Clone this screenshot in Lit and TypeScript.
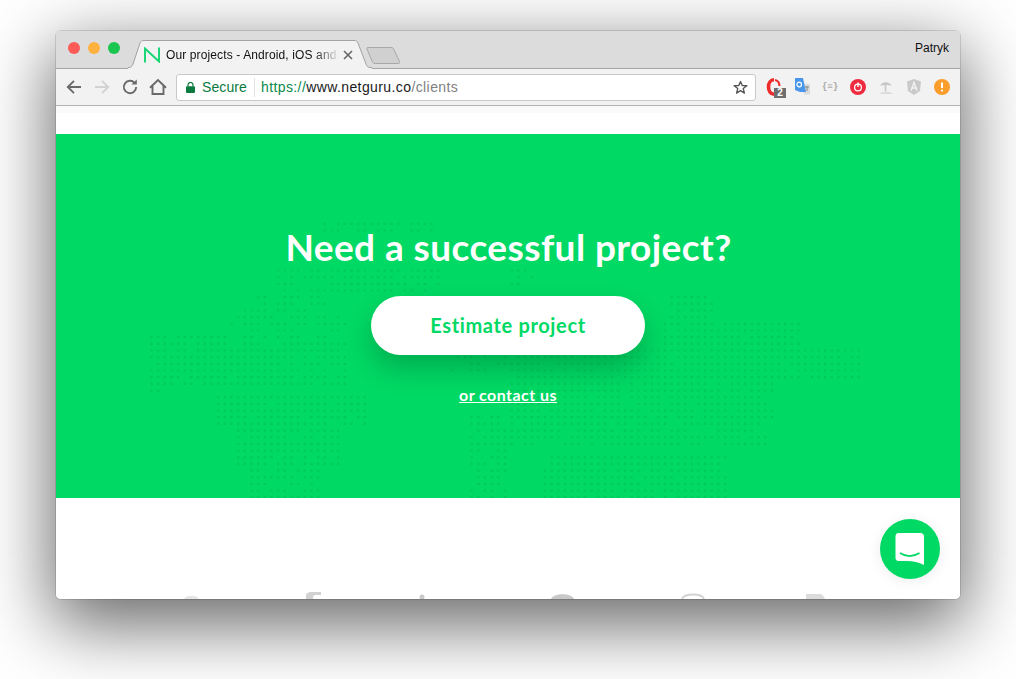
import { LitElement, html, css, svg } from "lit";
import { customElement } from "lit/decorators.js";

// Land masses of the dotted map, in hero coordinates (x0, x1, y0, y1, density)
const LAND: number[][] = [
  [262, 381, 83, 98, 0.8],
  [217, 387, 134, 158, 0.85],
  [177, 271, 159, 178, 0.6],
  [172, 291, 179, 210, 0.6],
  [94, 291, 199, 254, 0.9],
  [94, 121, 254, 268, 0.5],
  [157, 311, 259, 294, 0.9],
  [177, 284, 293, 334, 0.9],
  [191, 264, 333, 364, 0.8],
  [411, 454, 276, 364, 0.8],
  [454, 477, 134, 150, 0.6],
  [611, 661, 159, 187, 0.9],
  [604, 747, 186, 214, 0.9],
  [454, 804, 209, 247, 0.9],
  [454, 717, 246, 287, 0.9],
  [454, 714, 286, 310, 0.8],
  [487, 674, 319, 364, 0.9],
  [390, 500, 205, 236, 0.6],
];

function mapPath(): string {
  let seed = 7;
  const rnd = () => {
    seed = (seed * 16807) % 2147483647;
    return seed / 2147483647;
  };
  const step = 6.67;
  let d = "";
  for (let row = 0; row * step < 364; row++) {
    const y = row * step + 2;
    for (let col = 0; col * step < 904; col++) {
      const x = col * step + 1;
      const hit = LAND.find((r) => x >= r[0] && x < r[1] && y >= r[2] && y < r[3]);
      if (hit && rnd() < hit[4]) d += `M${x.toFixed(1)} ${y.toFixed(1)}h2.2v2.2h-2.2z`;
    }
  }
  return d;
}

const MAP = mapPath();

@customElement("app-root")
export class AppRoot extends LitElement {
  static styles = css`
    :host {
      display: block;
      width: 1016px;
      height: 679px;
      box-sizing: border-box;
      padding: 31px 56px 0;
      background: #fff;
      overflow: hidden;
      font-family: "Liberation Sans", Arial, sans-serif;
    }
    .win {
      position: relative;
      width: 904px;
      height: 568px;
      border-radius: 5px;
      background: #fff;
      overflow: hidden;
      display: flex;
      flex-direction: column;
    }
    .shadow {
      position: absolute;
      left: 56px;
      top: 31px;
      width: 904px;
      height: 568px;
      border-radius: 5px;
      box-shadow: 0 22px 70px 4px rgba(0, 0, 0, 0.6), 0 0 0 1px rgba(0, 0, 0, 0.12);
    }
    .titlebar {
      position: relative;
      flex: none;
      height: 37px;
      background: #dcdcdc;
      display: flex;
      align-items: center;
      border-bottom: 1px solid #a6a6a6;
      box-sizing: content-box;
    }
    .lights {
      display: flex;
      gap: 8px;
      margin-left: 12px;
      margin-top: -3px;
    }
    .light {
      width: 12px;
      height: 12px;
      border-radius: 50%;
    }
    .red { background: #fc5b57; }
    .amber { background: #fdb13e; }
    .green { background: #1ac64f; }
    .tabshape {
      position: absolute;
      left: 72px;
      top: 8px;
    }
    .tab {
      position: absolute;
      left: 88px;
      top: 16px;
      width: 218px;
      height: 16px;
      display: flex;
      align-items: center;
    }
    .fav { flex: none; }
    .tabtitle {
      margin-left: 6px;
      width: 176px;
      flex: none;
      white-space: nowrap;
      font-size: 12px;
      letter-spacing: 0.12px;
      color: #111;
      -webkit-mask-image: linear-gradient(90deg, #000 148px, transparent 174px);
      mask-image: linear-gradient(90deg, #000 148px, transparent 174px);
    }
    .close { margin-left: 1px; flex: none; }
    .newtab {
      position: absolute;
      left: 310px;
      top: 15px;
    }
    .user {
      margin-left: auto;
      margin-right: 11px;
      margin-top: -3px;
      font-size: 12px;
      color: #111;
    }
    .toolbar {
      flex: none;
      height: 36px;
      background: #f2f2f2;
      border-bottom: 1px solid #b4b4b4;
      display: flex;
      align-items: center;
    }
    .nav {
      display: block;
      flex: none;
    }
    .omni {
      flex: none;
      width: 580px;
      height: 27px;
      box-sizing: border-box;
      background: #fff;
      border: 1px solid #c9c9c9;
      border-radius: 3px;
      display: flex;
      align-items: center;
      font-size: 14px;
      padding-left: 9px;
    }
    .secure { color: #0b7a3f; margin-left: 7px; letter-spacing: 0.1px; }
    .sep {
      width: 1px;
      height: 19px;
      background: #e2e2e2;
      margin: 0 6px 0 7px;
    }
    .url { letter-spacing: 0.4px; }
    .https { color: #0b8a4a; }
    .dom { color: #1a1a1a; }
    .path { color: #808080; }
    .star { margin-left: auto; margin-right: 7px; }
    .exts {
      display: flex;
      margin-left: 4px;
      align-items: center;
    }
    .ext {
      position: relative;
      width: 28px;
      height: 18px;
      display: flex;
      justify-content: center;
      flex: none;
    }
    .badge {
      position: absolute;
      left: 14px;
      top: 10px;
      width: 12px;
      height: 10px;
      background: #6e6e6e;
      color: #fff;
      font-size: 10px;
      font-weight: 700;
      line-height: 10px;
      text-align: center;
    }
    .brace {
      font-family: "Liberation Mono", monospace;
      font-size: 9px;
      font-weight: 700;
      line-height: 18px;
      color: #a8a8a8;
      white-space: nowrap;
    }
    .gap {
      flex: none;
      height: 28px;
      background: #fff;
    }
    .strip {
      height: 7px;
      background: #fafafa;
    }
    .hero {
      position: relative;
      flex: none;
      height: 364px;
      background: #00d964;
      display: flex;
      flex-direction: column;
      align-items: center;
      font-family: Lato, sans-serif;
      color: #fff;
      overflow: hidden;
    }
    .map {
      position: absolute;
      left: 0;
      top: 0;
    }
    h1 {
      position: relative;
      margin: 90px 0 0 1px;
      font-size: 37px;
      line-height: 46px;
      font-weight: 700;
      letter-spacing: 0.42px;
      white-space: nowrap;
    }
    .cta {
      position: relative;
      margin-top: 26px;
      width: 274px;
      height: 59px;
      border-radius: 30px;
      background: #fff;
      color: #00d964;
      font-size: 20px;
      font-weight: 700;
      letter-spacing: 0.65px;
      line-height: 59px;
      text-align: center;
      box-shadow: 0 14px 28px rgba(0, 0, 0, 0.2);
    }
    .contact {
      position: relative;
      margin-top: 29px;
      font-size: 16px;
      line-height: 22px;
      font-weight: 700;
      letter-spacing: 0.45px;
      color: #fff;
      text-decoration: underline;
    }
    .rest {
      flex: 1;
      display: flex;
      align-items: flex-end;
      background: #fff;
    }
    .rest svg { display: block; }
    .chat {
      position: absolute;
      right: 20px;
      bottom: 20px;
      width: 60px;
      height: 60px;
      border-radius: 50%;
      background: #00d964;
      box-shadow: 0 2px 14px rgba(0, 0, 0, 0.08);
      display: flex;
      align-items: center;
      justify-content: center;
    }
  `;

  render() {
    return html`
      <div class="shadow"></div>
      <div class="win">
        <div class="titlebar">
          <div class="lights">
            <div class="light red"></div>
            <div class="light amber"></div>
            <div class="light green"></div>
          </div>
          <svg class="tabshape" width="244" height="30" viewBox="0 0 244 30">
            <path d="M0 30V28.5H1C3 28.5 4 27.5 5 25L12 4C13 2 14 1.5 16 1.5H226C228 1.5 229 2 230 4L238 25C239 27.5 240 28.5 242 28.5H244V30Z" fill="#f2f2f2" />
            <path d="M0 28.5H1C3 28.5 4 27.5 5 25L12 4C13 2 14 1.5 16 1.5H226C228 1.5 229 2 230 4L238 25C239 27.5 240 28.5 242 28.5H244" fill="none" stroke="#a3a3a3" />
          </svg>
          <div class="tab">
            <svg class="fav" width="16" height="16" viewBox="0 0 16 16">
              <path d="M1 15.5V1.5L15 14.5V0.5" fill="none" stroke="#11d671" stroke-width="1.9" />
            </svg>
            <span class="tabtitle">Our projects - Android, iOS and</span>
            <svg class="close" width="10" height="10" viewBox="0 0 10 10">
              <path d="M1 1L9 9M9 1L1 9" stroke="#666" stroke-width="1.6" />
            </svg>
          </div>
          <svg class="newtab" width="36" height="19" viewBox="0 0 36 19">
            <path d="M2 1.5H25C26.5 1.5 27 2 27.7 3L33.5 15.5C34 17 33.5 17.5 32 17.5H9C7.5 17.5 7 17 6.3 15.7L1 3C.6 2 .8 1.5 2 1.5Z" fill="#d0d0d0" stroke="#a8a8a8" />
          </svg>
          <div class="user">Patryk</div>
        </div>
        <div class="toolbar">
          <svg class="nav" width="120" height="18" viewBox="0 0 120 18">
            <path d="M25 9H12M18 2.8L11.8 9L18 15.2" fill="none" stroke="#6a6a6a" stroke-width="1.9" />
            <path d="M39 9H52M46 2.8L52.2 9L46 15.2" fill="none" stroke="#d2d2d2" stroke-width="1.9" />
            <path d="M78.6 4.8A6.2 6.2 0 1 0 80.2 9" fill="none" stroke="#6a6a6a" stroke-width="1.9" />
            <path d="M75.5 6.6H80.8V1.4Z" fill="#6a6a6a" />
            <path d="M94 9.8L102 2L110 9.8M96.5 8V16H107.5V8" fill="none" stroke="#6a6a6a" stroke-width="1.9" />
          </svg>
          <div class="omni">
            <svg width="9" height="11" viewBox="0 0 9 11"><path d="M2 4.5V3a2.5 2.5 0 0 1 5 0v1.5" fill="none" stroke="#0b7a3f" stroke-width="1.2" /><rect y="4.2" width="9" height="6.8" rx="1" fill="#0b7a3f" /></svg>
            <span class="secure">Secure</span>
            <span class="sep"></span>
            <span class="url"><span class="https">https://</span><span class="dom">www.netguru.co</span><span class="path">/clients</span></span>
            <svg class="star" width="15" height="15" viewBox="0 0 16 16"><path d="M8 1.6L9.9 6H14.8L10.9 9.1L12.2 14L8 11.3L3.8 14L5.1 9.1L1.2 6H6.1Z" fill="none" stroke="#555" stroke-width="1.4" stroke-linejoin="round" /></svg>
          </div>
          <div class="exts">
            <div class="ext">
              <svg width="16" height="18" viewBox="0 0 16 18"><path d="M8 1.8C4.8 1.8 2.5 5 2.5 9S4.8 16.2 8 16.2" fill="none" stroke="#ee2b2b" stroke-width="3.6" /><path d="M9 2C11.5 2.3 13.5 5 13.5 8" fill="none" stroke="#ee2b2b" stroke-width="2.2" /></svg>
              <span class="badge">2</span>
            </div>
            <div class="ext">
              <svg width="18" height="18" viewBox="0 0 18 18"><path d="M9 6H17V16.5H11Z" fill="#dcdcdc" /><path d="M2 0H10L13 14H7L2 12Z" fill="#4a96ea" /><circle cx="6.2" cy="6.5" r="2.3" fill="none" stroke="#fff" stroke-width="1.2" /><path d="M12 9H16M14 8V13" stroke="#8a8a8a" stroke-width="1" /></svg>
            </div>
            <div class="ext"><span class="brace">{≡}</span></div>
            <div class="ext">
              <svg width="16" height="18" viewBox="0 0 16 18"><circle cx="8" cy="9" r="8" fill="#ee2b3f" /><circle cx="8" cy="9.5" r="3.4" fill="none" stroke="#fff" stroke-width="1.3" /><path d="M8 4.5V9" stroke="#fff" stroke-width="1.4" /></svg>
            </div>
            <div class="ext">
              <svg width="16" height="18" viewBox="0 0 16 18"><path d="M2.5 8C3 3 12 3 13.5 8C11 6.8 5 6.8 2.5 8Z" fill="#c6c6c6" /><path d="M7.5 7V13" stroke="#c6c6c6" stroke-width="1.6" /><path d="M1 16C4 12.5 12 12.5 15 16Z" fill="#dcdcdc" /></svg>
            </div>
            <div class="ext">
              <svg width="16" height="18" viewBox="0 0 16 18"><path d="M8 1L15 3.5L14 13L8 17L2 13L1 3.5Z" fill="#c9c9c9" /><path d="M5 12.5L8 4.5L11 12.5M6.2 10H9.8" fill="none" stroke="#f2f2f2" stroke-width="1.4" /></svg>
            </div>
            <div class="ext">
              <svg width="16" height="18" viewBox="0 0 16 18"><circle cx="8" cy="9" r="8" fill="#fb9d2c" /><path d="M8 4.5V10" stroke="#fff" stroke-width="2" /><circle cx="8" cy="12.6" r="1.1" fill="#fff" /></svg>
            </div>
          </div>
        </div>
        <div class="gap"><div class="strip"></div></div>
        <div class="hero">
          <svg class="map" width="904" height="364" viewBox="0 0 904 364">
            ${svg`<path d="${MAP}" fill="#00c95d" />`}
          </svg>
          <h1>Need a successful project?</h1>
          <div class="cta">Estimate project</div>
          <div class="contact">or contact us</div>
        </div>
        <div class="rest">
          <svg width="904" height="8" viewBox="0 0 904 8">
            <path d="M128 8C130 3.5 141 3.5 143 8Z" fill="#e6e6e6" />
            <path d="M250 8V5C250 2 252 1 256 1H265V4H260C257 4 257 6 257 8Z" fill="#d2d2d2" />
            <circle cx="366" cy="6" r="2.5" fill="#c9c9c9" />
            <path d="M495 8C497 1.5 516 1.5 518 8Z" fill="#c8c8c8" />
            <path d="M626 8C628 2 646 2 648 8" fill="none" stroke="#d2d2d2" stroke-width="2" />
            <path d="M750 8V3H764C766 3 768 5 769 8Z" fill="#dcdcdc" />
          </svg>
        </div>
        <div class="chat">
          <svg width="30" height="34" viewBox="0 0 30 34">
            <path d="M3.5 1H25.5C27.5 1 29 2.5 29 4.5V33C24 30.5 18 29 12 29H3.5C1.5 29 0.5 27.5 0.5 25.5V4.5C0.5 2.5 1.5 1 3.5 1Z" fill="#fff" />
            <path d="M5 21C11 25 18 25 24.5 21" fill="none" stroke="#00d964" stroke-width="1.8" />
          </svg>
        </div>
      </div>
    `;
  }
}
